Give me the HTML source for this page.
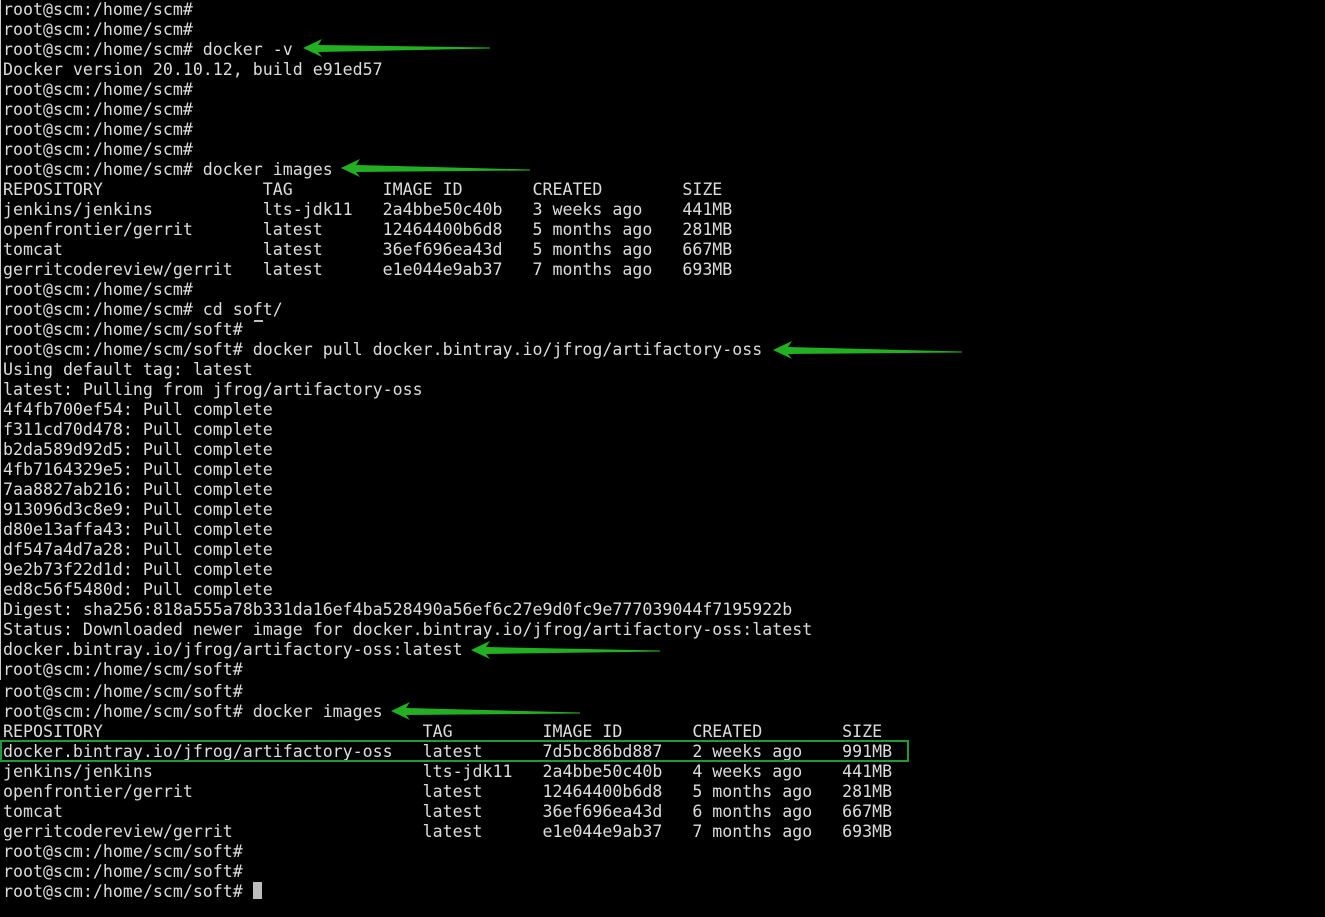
<!DOCTYPE html>
<html><head><meta charset="utf-8"><style>
html,body{margin:0;padding:0;background:#000;width:1325px;height:917px;overflow:hidden;position:relative}
pre{position:absolute;left:3px;margin:0;font-family:"DejaVu Sans Mono","Liberation Mono",monospace;font-size:16.6px;line-height:20px;color:#dcdcdc;white-space:pre}
</style></head><body>
<div style="position:absolute;left:0;top:0;width:1px;height:680px;background:#cfcfcf"></div>
<pre style="top:0px">root@scm:/home/scm#
root@scm:/home/scm#
root@scm:/home/scm# docker -v
Docker version 20.10.12, build e91ed57
root@scm:/home/scm#
root@scm:/home/scm#
root@scm:/home/scm#
root@scm:/home/scm#
root@scm:/home/scm# docker images
REPOSITORY                TAG         IMAGE ID       CREATED        SIZE
jenkins/jenkins           lts-jdk11   2a4bbe50c40b   3 weeks ago    441MB
openfrontier/gerrit       latest      12464400b6d8   5 months ago   281MB
tomcat                    latest      36ef696ea43d   5 months ago   667MB
gerritcodereview/gerrit   latest      e1e044e9ab37   7 months ago   693MB
root@scm:/home/scm#
root@scm:/home/scm# cd soft/
root@scm:/home/scm/soft#
root@scm:/home/scm/soft# docker pull docker.bintray.io/jfrog/artifactory-oss
Using default tag: latest
latest: Pulling from jfrog/artifactory-oss
4f4fb700ef54: Pull complete
f311cd70d478: Pull complete
b2da589d92d5: Pull complete
4fb7164329e5: Pull complete
7aa8827ab216: Pull complete
913096d3c8e9: Pull complete
d80e13affa43: Pull complete
df547a4d7a28: Pull complete
9e2b73f22d1d: Pull complete
ed8c56f5480d: Pull complete
Digest: sha256:818a555a78b331da16ef4ba528490a56ef6c27e9d0fc9e777039044f7195922b
Status: Downloaded newer image for docker.bintray.io/jfrog/artifactory-oss:latest
docker.bintray.io/jfrog/artifactory-oss:latest
root@scm:/home/scm/soft#</pre>
<pre style="top:682px">root@scm:/home/scm/soft#
root@scm:/home/scm/soft# docker images
REPOSITORY                                TAG         IMAGE ID       CREATED        SIZE
docker.bintray.io/jfrog/artifactory-oss   latest      7d5bc86bd887   2 weeks ago    991MB
jenkins/jenkins                           lts-jdk11   2a4bbe50c40b   4 weeks ago    441MB
openfrontier/gerrit                       latest      12464400b6d8   5 months ago   281MB
tomcat                                    latest      36ef696ea43d   6 months ago   667MB
gerritcodereview/gerrit                   latest      e1e044e9ab37   7 months ago   693MB
root@scm:/home/scm/soft#
root@scm:/home/scm/soft#
root@scm:/home/scm/soft# </pre>
<div style="position:absolute;left:253px;top:882px;width:9px;height:17px;background:#bdbdbd"></div>
<div style="position:absolute;left:254px;top:320px;width:9px;height:2px;background:#bdbdbd"></div>
<div style="position:absolute;left:0;top:740px;width:905px;height:18px;border:2px solid #1f9a3a"></div>
<svg width="1325" height="917" style="position:absolute;left:0;top:0">
<g fill="#22b022">
<polygon points="303,48 322,39 318,45 490,47.5 490,48.5 318,52 322,57"/>
<polygon points="341,168 360,159 356,165 530,169.5 530,170.5 356,172 360,177"/>
<polygon points="773,350 792,341 788,347 962,351.5 962,352.5 788,354 792,359"/>
<polygon points="471,650 490,641 486,647 660,650.5 660,651.5 486,654 490,659"/>
<polygon points="391,711 410,702 406,708 580,712.5 580,713.5 406,715 410,720"/>
</g></svg>
</body></html>
